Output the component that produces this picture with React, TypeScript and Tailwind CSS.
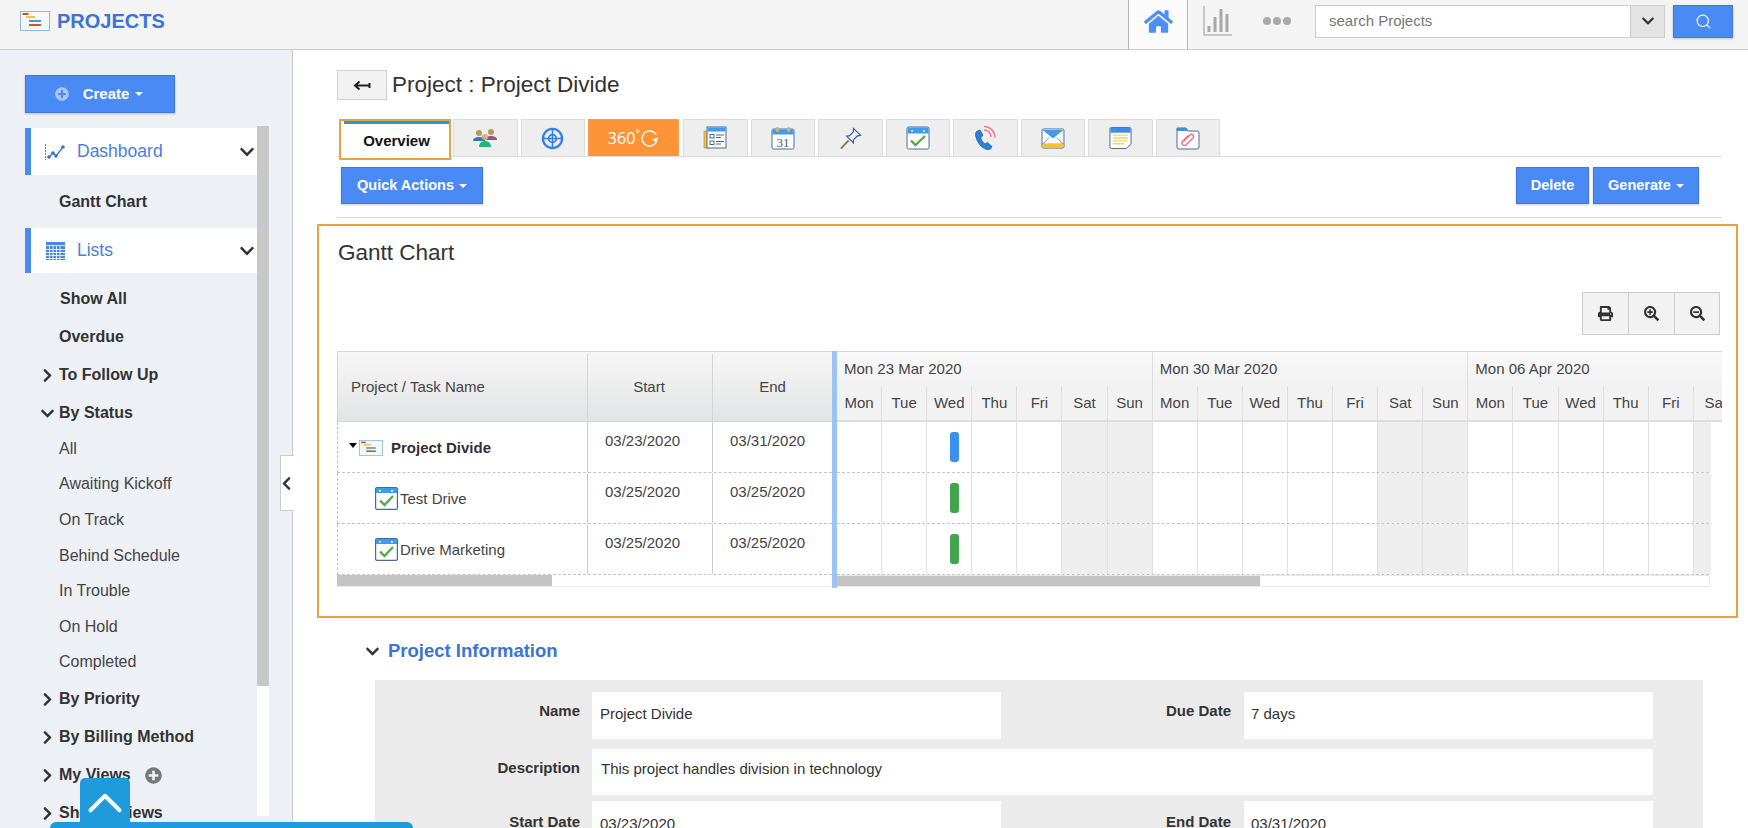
import React from "react";
import { ChevronUp, Search } from "lucide-react";
import {
  FaChevronDown,
  FaChevronLeft,
  FaChevronRight,
  FaHome,
  FaPlusCircle,
  FaPrint,
  FaSearchMinus,
  FaSearchPlus,
} from "react-icons/fa";

const days = ["Mon", "Tue", "Wed", "Thu", "Fri", "Sat", "Sun"];
const allDays = [...days, ...days, ...days];
const weekStarts = ["Mon 23 Mar 2020", "Mon 30 Mar 2020", "Mon 06 Apr 2020"];

const statusItems = ["All", "Awaiting Kickoff", "On Track", "Behind Schedule", "In Trouble", "On Hold", "Completed"];

const rows = [
  { name: "Project Divide", start: "03/23/2020", end: "03/31/2020", color: "bg-[#3a8fef]", project: true },
  { name: "Test Drive", start: "03/25/2020", end: "03/25/2020", color: "bg-[#43a34f]", project: false },
  { name: "Drive Marketing", start: "03/25/2020", end: "03/25/2020", color: "bg-[#43a34f]", project: false },
];

function GanttLogo({ className }: { className?: string }) {
  return (
    <svg viewBox="0 0 30 20" className={className}>
      <rect x="0.5" y="0.5" width="29" height="19" fill="#f5f8fb" stroke="#8dbbdf" />
      <rect x="2.5" y="2" width="6" height="2" fill="#c4562c" />
      <rect x="6" y="5" width="9" height="2" fill="#f2c53d" />
      <rect x="9" y="9" width="12" height="2" fill="#3d9ae2" />
      <rect x="9" y="13" width="12" height="2" fill="#c9552b" />
    </svg>
  );
}

function TaskIcon({ className }: { className?: string }) {
  return (
    <svg viewBox="0 0 23 23" className={className}>
      <rect x="0.6" y="0.6" width="21.8" height="21.8" rx="1.5" fill="#fff" stroke="#4a6a95" strokeWidth="1.2" />
      <rect x="1" y="1" width="21" height="5" fill="#3f9bf0" />
      <rect x="4" y="3" width="2" height="1.5" fill="#fff" />
      <rect x="16" y="3" width="2" height="1.5" fill="#fff" />
      <path d="M5 13.5l4.5 4.5L18 9" fill="none" stroke="#5aa845" strokeWidth="2.4" />
    </svg>
  );
}

function PeopleIcon() {
  return (
    <svg viewBox="0 0 26 20" className="h-[20px] w-[26px]">
      <circle cx="7" cy="5" r="3" fill="#b89a5e" />
      <path d="M1 13c0-3 3-4 6-4s6 1 6 4z" fill="#2f7ab8" />
      <circle cx="19" cy="4" r="3" fill="#b89a5e" />
      <path d="M13 12c0-3 3-4 6-4s6 1 6 4z" fill="#a04a9c" />
      <circle cx="13" cy="9" r="3" fill="#e0b068" />
      <path d="M7 19c0-4 3-6 6-6s6 2 6 6z" fill="#2fb07a" />
    </svg>
  );
}

function TargetIcon() {
  return (
    <svg viewBox="0 0 24 24" className="h-[23px] w-[23px]">
      <circle cx="12" cy="12" r="10" fill="none" stroke="#2f81ea" strokeWidth="2.4" />
      <circle cx="12" cy="12" r="4" fill="none" stroke="#2f81ea" strokeWidth="1.8" />
      <path d="M12 2v20M2 12h20" stroke="#2f81ea" strokeWidth="1.6" />
    </svg>
  );
}

function FormIcon() {
  return (
    <svg viewBox="0 0 24 24" className="h-[24px] w-[24px]">
      <rect x="1" y="5" width="5" height="17" fill="#f0c04a" stroke="#b58a2a" strokeWidth="0.6" />
      <rect x="4" y="1" width="19" height="21" fill="#fff" stroke="#4a6a95" strokeWidth="1" />
      <rect x="4.5" y="1.5" width="18" height="4" fill="#3f9bf0" />
      <rect x="7" y="8.5" width="4" height="3.5" fill="none" stroke="#4a6a95" />
      <rect x="7" y="15" width="4" height="3.5" fill="none" stroke="#4a6a95" />
      <path d="M13 9h8M13 11.5h5M13 15.5h8M13 18h5" stroke="#4a6a95" />
    </svg>
  );
}

function CalendarIcon() {
  return (
    <svg viewBox="0 0 24 24" className="h-[24px] w-[24px]">
      <rect x="1" y="3" width="22" height="20" rx="1.5" fill="#fff" stroke="#4a6a95" />
      <rect x="1.5" y="3.5" width="21" height="5" fill="#3f9bf0" />
      <rect x="5" y="1" width="3" height="5" rx="1.5" fill="#d2b45a" />
      <rect x="16" y="1" width="3" height="5" rx="1.5" fill="#d2b45a" />
      <text x="12" y="20.5" fontSize="13" fill="#3f5a80" textAnchor="middle" fontFamily="'Liberation Serif', serif">31</text>
    </svg>
  );
}

function PinIcon() {
  return (
    <svg viewBox="0 0 24 24" className="h-[23px] w-[23px]">
      <path d="M15 1.5l7.5 7-3.5 1-4 4 0 3-7-7 3-.5 4-4z" fill="#e8f1fb" stroke="#36598c" strokeWidth="1.2" />
      <path d="M10 14L2 22.5" stroke="#8a7a4a" strokeWidth="2" />
    </svg>
  );
}

function CheckCalIcon() {
  return (
    <svg viewBox="0 0 24 24" className="h-[24px] w-[24px]">
      <rect x="1" y="1" width="22" height="22" rx="1.5" fill="#fff" stroke="#4a6a95" />
      <rect x="1.5" y="1.5" width="21" height="6" fill="#3f9bf0" />
      <rect x="5" y="4" width="2" height="1.5" fill="#fff" />
      <rect x="17" y="4" width="2" height="1.5" fill="#fff" />
      <path d="M5 14.5l4.5 4.5L19 10" fill="none" stroke="#5aa845" strokeWidth="2.4" />
    </svg>
  );
}

function PhoneIcon() {
  return (
    <svg viewBox="0 0 24 26" className="h-[26px] w-[24px]">
      <path d="M7 5L3.5 6.5C1 9 4 17 8 21c3 3 7 4.500 9.500 3l1.500-2.500-4.500-4-2.500 1.500C9.500 17.500 7.500 14 8 12l2-1.500z" fill="#2e7fd6" stroke="#1f5ea8" strokeWidth="0.8" />
      <path d="M11 5c4 0 7 3 7 7" fill="none" stroke="#ef7d8e" strokeWidth="1.6" />
      <path d="M11 1.500c6 0 11 5 11 11" fill="none" stroke="#ef7d8e" strokeWidth="1.6" />
    </svg>
  );
}

function MailIcon() {
  return (
    <svg viewBox="0 0 24 22" className="h-[21px] w-[24px]">
      <rect x="0.5" y="1" width="23" height="20" rx="1.5" fill="#fff" stroke="#4a6a95" />
      <path d="M1 16h22v4.500H1z" fill="#f2c230" />
      <path d="M1 2h22L12 11z" fill="#3f9bf0" />
      <path d="M1 17l7-7M23 17l-7-7" stroke="#4a6a95" strokeWidth="0.8" />
    </svg>
  );
}

function NoteIcon() {
  return (
    <svg viewBox="0 0 24 24" className="h-[24px] w-[23px]">
      <path d="M1 2.500A1.500 1.500 0 012.500 1h19A1.500 1.500 0 0123 2.500V18l-5 5H2.500A1.500 1.500 0 011 21.500z" fill="#fff" stroke="#4a6a95" />
      <rect x="1.500" y="1.500" width="21" height="5" fill="#3f8ee6" />
      <path d="M4 9h16M4 12h16M4 15h16M4 18h12" stroke="#f7d75a" strokeWidth="1.5" />
    </svg>
  );
}

function ClipIcon() {
  return (
    <svg viewBox="0 0 24 24" className="h-[24px] w-[24px]">
      <path d="M1 2h9l2 3h9a2 2 0 012 2v14a2 2 0 01-2 2H3a2 2 0 01-2-2z" fill="#fff" stroke="#4a6a95" />
      <path d="M1 2h9l1.500 3H1z" fill="#3f8ee6" />
      <path d="M8 15l6-6a2 2 0 013 3l-7 7a2.500 2.500 0 01-3.500-3.500l6-6" fill="none" stroke="#ec6a80" strokeWidth="1.4" />
    </svg>
  );
}

function BarsIcon() {
  return (
    <svg viewBox="0 0 29 30" className="h-[30px] w-[29px]">
      <path d="M1 0v29h28" fill="none" stroke="#b5b5b5" strokeWidth="1.4" />
      <path d="M6 26v-6M12 26V11M18 26V3M24 26V8" stroke="#a8a8a8" strokeWidth="3" />
    </svg>
  );
}

function DashIcon() {
  return (
    <svg viewBox="0 0 20 16" className="h-[16px] w-[20px]">
      <path d="M0.500 0v16" stroke="#4f7fd0" strokeWidth="1" strokeDasharray="2 1" />
      <path d="M4 13l4-4 3 3 7-9" fill="none" stroke="#3f6fc8" strokeWidth="1.300" />
      <circle cx="4" cy="13" r="1.800" fill="#3f6fc8" />
      <circle cx="8" cy="9" r="1.800" fill="#3f6fc8" />
      <circle cx="11" cy="12" r="1.800" fill="#3f6fc8" />
      <circle cx="18" cy="3" r="1.800" fill="#3f6fc8" />
    </svg>
  );
}

function ListsIcon() {
  return (
    <svg viewBox="0 0 19 18" className="h-[18px] w-[19px]">
      <rect width="19" height="18" fill="#4d87d8" />
      <path d="M0 3.500h19M0 7.500h19M0 10.500h19M0 13.500h19M0 16.500h19M3.500 3.500V18M7 3.500V18M10.500 3.500V18M14 3.500V18" stroke="#fff" strokeWidth="0.8" />
    </svg>
  );
}

function Caret() {
  return <span className="inline-block border-x-[4px] border-t-[4px] border-x-transparent border-t-white" />;
}

function BlueButton({ children, className }: { children: React.ReactNode; className?: string }) {
  return (
    <button className={`flex shrink-0 items-center justify-center gap-[5px] border border-[#3f78d8] bg-[#4a8af4] text-[14.5px] font-bold text-white shadow-[0_1px_2px_rgba(0,0,0,0.2)] ${className ?? ""}`}>
      {children}
    </button>
  );
}

function TabBox({ children, className }: { children?: React.ReactNode; className?: string }) {
  return (
    <div className={`flex h-[37px] items-center justify-center border border-b-0 border-[#dcdcdc] bg-[#eeeeee] ${className ?? "w-[64.5px]"}`}>
      {children}
    </div>
  );
}

function MenuHeader({ icon, label, height }: { icon: React.ReactNode; label: string; height: string }) {
  return (
    <div className={`flex w-[232px] items-center border-l-[6px] border-[#4d8af0] bg-white ${height}`}>
      <div className="flex w-[46px] justify-center pl-[2px]">{icon}</div>
      <span className="text-[17.5px] text-[#4a7fd8]">{label}</span>
      <FaChevronDown className="mr-[2px] ml-auto text-[16px] text-[#333]" />
    </div>
  );
}

function TreeRow({ label, open, extra }: { label: string; open?: boolean; extra?: React.ReactNode }) {
  return (
    <div className="relative flex h-[38px] items-center pl-[59px] text-[16px] font-bold text-[#333]">
      <span className="absolute left-[40px] flex w-[15px] justify-center">
        {open ? <FaChevronDown className="text-[15px]" /> : <FaChevronRight className="text-[15px]" />}
      </span>
      {label}
      {extra}
    </div>
  );
}

function Sidebar() {
  return (
    <aside className="flex h-[778px] w-[293px] shrink-0 flex-col border-r border-[#cccccc] bg-[#edf0f5] pt-[25px] pl-[25px]">
      <BlueButton className="h-[38px] w-[150px] gap-[6px] pr-[2px] text-[15px]">
        <FaPlusCircle className="mr-[8px] text-[14px] text-[#a9c6f7]" />
        Create
        <Caret />
      </BlueButton>
      <div className="mt-[13px] flex">
        <div className="-ml-[25px] w-[257px] pt-[2px] pl-[25px]">
          <MenuHeader icon={<DashIcon />} label="Dashboard" height="h-[47px]" />
          <div className="flex h-[53px] items-center pl-[34px] text-[16px] font-bold text-[#333]">Gantt Chart</div>
          <MenuHeader icon={<ListsIcon />} label="Lists" height="h-[45px]" />
          <div className="-ml-[25px] pt-[7px]">
            <div className="flex h-[38px] items-center pl-[60px] text-[16px] font-bold text-[#333]">Show All</div>
            <div className="flex h-[38px] items-center pl-[59px] text-[16px] font-bold text-[#333]">Overdue</div>
            <TreeRow label="To Follow Up" />
            <TreeRow label="By Status" open />
            <div className="-mt-px">
              {statusItems.map((item) => (
                <div key={item} className="flex h-[35.6px] items-center pl-[59px] text-[16px] text-[#444]">{item}</div>
              ))}
            </div>
            <TreeRow label="By Priority" />
            <TreeRow label="By Billing Method" />
            <TreeRow label="My Views" extra={<FaPlusCircle className="ml-[14px] text-[17px] text-[#777]" />} />
            <TreeRow label="Shared Views" />
          </div>
        </div>
        <div className="h-[690px] w-[12px] bg-white">
          <div className="h-[560px] bg-[#c8c8c8]" />
        </div>
      </div>
    </aside>
  );
}

function TopBar() {
  return (
    <header className="flex h-[50px] items-center border-b border-[#cccccc] bg-[#f4f4f4] pl-[20px]">
      <div className="flex items-center pb-[7px]">
        <GanttLogo className="h-[20px] w-[30px]" />
        <span className="ml-[7px] text-[20px] leading-[24px] font-bold text-[#3b73d6]">PROJECTS</span>
      </div>
      <div className="ml-auto flex h-full items-center">
        <div className="flex h-full w-[60px] items-center justify-center border-x border-[#b5b5b5] bg-[#fbfbfb] pb-[6px]">
          <FaHome className="text-[29px] text-[#4d8ff7]" />
        </div>
        <div className="flex items-center pb-[7px]">
          <div className="ml-[15px]"><BarsIcon /></div>
          <div className="ml-[31px] flex gap-[2px]">
            <span className="size-[8px] rounded-full bg-[#a9a9a9]" />
            <span className="size-[8px] rounded-full bg-[#a9a9a9]" />
            <span className="size-[8px] rounded-full bg-[#a9a9a9]" />
          </div>
          <div className="ml-[24px] flex h-[33px] w-[350px] border border-[#cccccc] bg-white">
            <div className="flex flex-1 items-center pl-[13px] text-[15px] text-[#777]">search Projects</div>
            <div className="flex w-[34px] items-center justify-center border-l border-[#cccccc] bg-[#e3e3e3]">
              <FaChevronDown className="text-[14px] text-[#333]" />
            </div>
          </div>
          <BlueButton className="mr-[15px] ml-[8px] h-[33px] w-[60px]">
            <Search size={17} strokeWidth={1.6} />
          </BlueButton>
        </div>
      </div>
    </header>
  );
}

function TabsRow() {
  return (
    <div className="mt-[19px] flex h-[38px] w-[1385px] items-end border-b border-[#dcdcdc] pl-[2px]">
      <div className="relative z-10 -mb-[4px] h-[41px] w-[112px] border-2 border-[#e8a33d] bg-white">
        <div className="ml-[3px] h-[3px] bg-[#1f9bdc]" />
        <div className="flex h-[34px] items-center justify-center pl-[3px] text-[15px] font-bold text-[#111]">Overview</div>
      </div>
      <div className="ml-[2px] flex items-end gap-[3px]">
        <TabBox><PeopleIcon /></TabBox>
        <TabBox><TargetIcon /></TabBox>
        <TabBox className="mr-[1px] w-[91px] border-[#f5a050] bg-[#fd9438]">
          <span className="text-[16px] text-white [font-family:'Open_Sans',sans-serif]">360</span>
          <span className="-mt-[8px] text-[12px] text-white">°</span>
          <svg viewBox="0 0 20 20" className="h-[19px] w-[19px]">
            <path d="M17 6A8 8 0 1017 14" fill="none" stroke="#fff" strokeWidth="1.4" />
            <path d="M13 11l4.500 3.500L19 9z" fill="#fff" />
          </svg>
        </TabBox>
        <TabBox><FormIcon /></TabBox>
        <TabBox><CalendarIcon /></TabBox>
        <TabBox><PinIcon /></TabBox>
        <TabBox><CheckCalIcon /></TabBox>
        <TabBox><PhoneIcon /></TabBox>
        <TabBox><MailIcon /></TabBox>
        <TabBox><NoteIcon /></TabBox>
        <TabBox><ClipIcon /></TabBox>
      </div>
    </div>
  );
}

function ToolButton({ children, last }: { children: React.ReactNode; last?: boolean }) {
  return (
    <div className={`flex h-[43px] w-[46px] items-center justify-center border-y border-l border-[#cccccc] bg-[#f2f2f2] text-[15px] text-[#333] ${last ? "border-r" : ""}`}>
      {children}
    </div>
  );
}

function GanttTable() {
  return (
    <div className="w-[495px] shrink-0">
      <div className="flex h-[71px] border-y border-l border-[#d4d4d4] bg-gradient-to-b from-[#f6f6f6] to-[#e3e4e5] pt-[2px] text-[15px] text-[#444]">
        <div className="flex w-[249px] items-center pl-[13px]">Project / Task Name</div>
        <div className="flex w-[125px] items-center justify-center border-l border-[#d4d4d4] pr-[2px]">Start</div>
        <div className="flex flex-1 items-center justify-center border-l border-[#d4d4d4]">End</div>
      </div>
      {rows.map((row) => (
        <div key={row.name} className="flex h-[51px] border-b border-l border-dashed border-[#c4c4c4] text-[15px] text-[#444]">
          <div className="flex w-[249px] items-center">
            {row.project ? (
              <div className="flex items-center pt-[2px] pl-[11px]">
                <span className="-mt-[5px] mr-[2px] border-x-[4px] border-t-[5px] border-x-transparent border-t-black" />
                <GanttLogo className="h-[16px] w-[24px]" />
                <span className="ml-[8px] font-bold text-[#332f35]">{row.name}</span>
              </div>
            ) : (
              <div className="flex items-center pl-[37px]">
                <TaskIcon className="size-[23px]" />
                <span className="mt-[2px] ml-[2px]">{row.name}</span>
              </div>
            )}
          </div>
          <div className="w-[125px] border-l border-solid border-[#cccccc] pt-[8px] pl-[17px]">{row.start}</div>
          <div className="flex-1 border-l border-solid border-[#cccccc] pt-[8px] pl-[17px]">{row.end}</div>
        </div>
      ))}
      <div className="h-[12px] border-b border-[#eeeeee] bg-white">
        <div className="h-full w-[215px] bg-[#c4c4c4]" />
      </div>
    </div>
  );
}

function GanttTimeline() {
  return (
    <div className="w-[885px] shrink-0 overflow-hidden">
      <div className="flex h-[35px] w-[947px] border-t border-[#d4d4d4] bg-gradient-to-b from-[#f9f9f9] to-[#f1f1f1] text-[15px] text-[#444]">
        {weekStarts.map((week) => (
          <div key={week} className="flex w-[315.7px] items-center border-r border-[#dddddd] pl-[7px]">{week}</div>
        ))}
      </div>
      <div className="flex h-[36px] w-[947px] border-b-2 border-[#dddddd] bg-[#f2f2f2] text-[15px] text-[#444]">
        {allDays.map((day, i) => (
          <div key={i} className="flex w-[45.1px] shrink-0 items-center justify-center border-r border-[#dddddd]">{day}</div>
        ))}
      </div>
      <div className="w-[874px] overflow-hidden">
        {rows.map((row) => (
          <div key={row.name} className="flex h-[51px] w-[947px] border-b border-dashed border-[#c4c4c4]">
            {allDays.map((day, i) => (
              <div
                key={i}
                className={`flex w-[45.1px] shrink-0 items-center border-r border-[#e0e0e0] ${day === "Sat" || day === "Sun" ? "bg-[#eeeeee]" : ""}`}
              >
                {i === 2 && <div className={`ml-[23px] h-[30px] w-[9px] rounded-[3px] ${row.color}`} />}
              </div>
            ))}
          </div>
        ))}
      </div>
      <div className="h-[12px] w-[873px] border-y border-r border-[#e8e8e8] bg-white">
        <div className="h-full w-[423px] bg-[#c4c4c4]" />
      </div>
    </div>
  );
}

function ProjectInfo() {
  return (
    <div className="mt-[18px] ml-[28px]">
      <div className="flex h-[30px] items-center">
        <FaChevronDown className="text-[15px] text-[#333]" />
        <span className="ml-[8px] text-[18.5px] font-bold text-[#3b73d6]">Project Information</span>
      </div>
      <div className="mt-[14px] ml-[10px] h-[200px] w-[1328px] bg-[#ebebeb] pt-[12px] text-[15px] text-[#333]">
        <div className="flex h-[47px]">
          <div className="w-[205px] pt-[8px] text-right font-bold">Name</div>
          <div className="ml-[12px] w-[409px] bg-white pt-[11px] pl-[8px]">Project Divide</div>
          <div className="w-[230px] pt-[8px] text-right font-bold">Due Date</div>
          <div className="ml-[13px] w-[409px] bg-white pt-[11px] pl-[7px]">7 days</div>
        </div>
        <div className="mt-[10px] flex h-[46px]">
          <div className="w-[205px] pt-[8px] text-right font-bold">Description</div>
          <div className="ml-[12px] w-[1061px] bg-white pt-[9px] pl-[9px]">This project handles division in technology</div>
        </div>
        <div className="mt-[6px] flex h-[47px]">
          <div className="w-[205px] pt-[10px] text-right font-bold">Start Date</div>
          <div className="ml-[12px] w-[409px] bg-white pt-[12px] pl-[8px]">03/23/2020</div>
          <div className="w-[230px] pt-[10px] text-right font-bold">End Date</div>
          <div className="ml-[13px] w-[409px] bg-white pt-[12px] pl-[7px]">03/31/2020</div>
        </div>
      </div>
    </div>
  );
}

function MainContent() {
  return (
    <main className="h-[778px] flex-1 overflow-hidden pt-[20px] pl-[44px]">
      <div className="flex h-[30px] items-center">
        <button className="flex h-[30px] w-[50px] items-center justify-center border border-[#d0d0d0] bg-[#f2f2f2]">
          <svg viewBox="0 0 18 11" className="h-[11px] w-[18px]">
            <path d="M2 5.500h14M16.500 3v5M6.500 1.500L2 5.500l4.500 4" fill="none" stroke="#222" strokeWidth="2" />
          </svg>
        </button>
        <h1 className="ml-[5px] text-[22.5px] text-[#333]">Project : Project Divide</h1>
      </div>
      <TabsRow />
      <div className="mt-[10px] flex h-[37px] w-[1362px] justify-between pl-[4px]">
        <BlueButton className="w-[142px]">
          Quick Actions
          <Caret />
        </BlueButton>
        <div className="flex gap-[4px]">
          <BlueButton className="w-[73px]">Delete</BlueButton>
          <BlueButton className="w-[106px]">
            Generate
            <Caret />
          </BlueButton>
        </div>
      </div>
      <div className="mt-[13px] h-px w-[1385px] bg-[#d5d8dc]" />
      <section className="mt-[6px] -ml-[20px] h-[394px] w-[1421px] border-2 border-[#e8a33d] pt-[12px] pl-[18px]">
        <h2 className="pl-px text-[22.5px] leading-[30px] text-[#333]">Gantt Chart</h2>
        <div className="mt-[24px] flex w-[1383px] justify-end">
          <ToolButton><FaPrint /></ToolButton>
          <ToolButton><FaSearchPlus /></ToolButton>
          <ToolButton last><FaSearchMinus /></ToolButton>
        </div>
        <div className="mt-[16px] flex">
          <GanttTable />
          <div className="h-[237px] w-[5px] shrink-0 bg-[#9dc3f2]" />
          <GanttTimeline />
        </div>
      </section>
      <ProjectInfo />
    </main>
  );
}

export default function App() {
  return (
    <div className="relative h-[828px] w-[1748px] overflow-hidden bg-white [font-family:'Liberation_Sans',Arial,sans-serif]">
      <TopBar />
      <div className="flex">
        <Sidebar />
        <MainContent />
      </div>
      <div className="absolute top-[455px] left-[280px] flex h-[56px] w-[14px] items-center justify-end overflow-hidden border-y border-l border-[#cccccc] bg-white">
        <FaChevronLeft className="shrink-0 text-[15px] text-[#333]" />
      </div>
      <div className="absolute top-[778px] left-[80px] flex h-[50px] w-[50px] items-center justify-center overflow-hidden rounded-t-[5px] bg-[#1f9bdc]">
        <ChevronUp size={58} strokeWidth={1.65} className="shrink-0 text-white" />
      </div>
      <div className="absolute top-[822px] left-[50px] h-[6px] w-[363px] rounded-t-[6px] bg-[#1f9bdc]" />
    </div>
  );
}
